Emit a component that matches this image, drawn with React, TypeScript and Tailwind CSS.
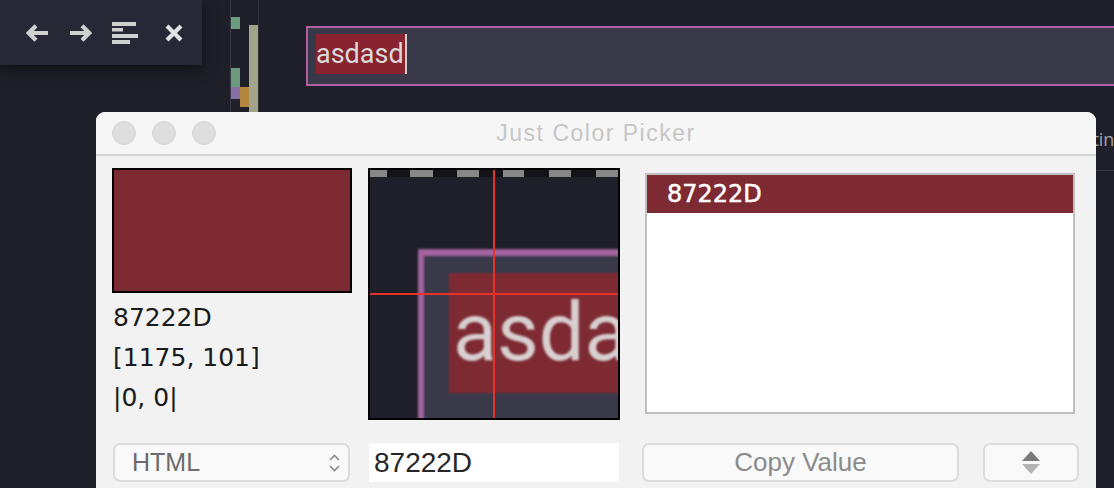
import React from 'react'

const ArrowLeft = () => (
  <svg width="22" height="18" viewBox="0 0 22 18" fill="none">
    <path d="M10 1.8 L2.8 9 L10 16.2 M3.5 9 H22" stroke="#d0d0d0" strokeWidth="4.2" />
  </svg>
)

const ArrowRight = () => (
  <svg width="22" height="18" viewBox="0 0 22 18" fill="none">
    <path d="M12 1.8 L19.2 9 L12 16.2 M18.5 9 H0" stroke="#d0d0d0" strokeWidth="4.2" />
  </svg>
)

const AlignLeft = () => (
  <svg width="26" height="22" viewBox="0 0 26 22" fill="#d0d0d0">
    <rect x="0" y="0" width="24" height="4" />
    <rect x="0" y="6" width="11" height="3.5" />
    <rect x="0" y="12" width="26" height="4" />
    <rect x="0" y="18" width="18" height="4" />
  </svg>
)

const Close = () => (
  <svg width="18" height="18" viewBox="0 0 18 18" fill="none">
    <path d="M2 2 L16 16 M16 2 L2 16" stroke="#e2e2e2" strokeWidth="4.2" />
  </svg>
)

function Toolbar() {
  return (
    <div className="flex h-[65px] w-[202px] items-center bg-[#272736] pl-[26px] shadow-[0_4px_12px_rgba(0,0,0,0.55)]">
      <ArrowLeft />
      <div className="ml-[22px]">
        <ArrowRight />
      </div>
      <div className="ml-[20px]">
        <AlignLeft />
      </div>
      <div className="ml-[27px]">
        <Close />
      </div>
    </div>
  )
}

function Strip() {
  return (
    <div className="h-full w-[29px] shrink-0 border-l border-r border-l-[#3a3a48] border-r-[#2e2e3a]">
      <svg width="27" height="488" viewBox="0 0 27 488">
        <rect x="0" y="17" width="9" height="12" fill="#6b9a7c" />
        <rect x="0" y="68" width="9" height="19" fill="#6b9a7c" />
        <rect x="0" y="87" width="9" height="12" fill="#8770a6" />
        <rect x="9" y="87" width="9" height="20" fill="#b3873d" />
        <rect x="18" y="25" width="9" height="463" fill="#a3a38a" />
      </svg>
    </div>
  )
}

function Editor() {
  return (
    <div className="flex min-w-0 flex-1 flex-col">
      <div className="pl-[47px] pt-[26px]">
        <div className="-mr-[12px] flex h-[60px] items-start border-2 border-[#b35fa6] bg-[#383849] pl-[8px] pt-[6px]">
          <span className="inline-block h-[40px] bg-[#88232f] pr-[1px] font-['Roboto',sans-serif] text-[27px] leading-[40px] text-[#dadada]">
            asdasd
          </span>
          <span className="h-[40px] w-[2px] bg-[#cfcfcf]" />
        </div>
      </div>
      <div className="h-[85px] border-b border-[#393946] pl-[807px] pt-[44px] font-['Open_Sans',sans-serif] text-[18px] leading-[18px] whitespace-nowrap text-[#a0a0a8]">
        Settings
      </div>
    </div>
  )
}

function Magnifier() {
  return (
    <div className="relative ml-[16px] h-[252px] w-[252px] shrink-0 overflow-hidden border-2 border-black bg-[#1f1f29]">
      <div className="flex h-[7px] bg-[#131318]">
        <div className="w-[19px] bg-[#878787]" />
        <div className="ml-[23px] w-[25px] bg-[#878787]" />
        <div className="ml-[24px] w-[24px] bg-[#878787]" />
        <div className="ml-[24px] w-[24px] bg-[#878787]" />
        <div className="ml-[25px] w-[24px] bg-[#878787]" />
        <div className="ml-[25px] w-[24px] bg-[#878787]" />
      </div>
      <div className="ml-[48px] mt-[72px] h-[200px] w-[260px] border-l-[6px] border-t-[7px] border-[#a2639f] bg-[#393949] pl-[25px] pt-[17px] blur-[0.8px]">
        <div className="h-[120px] w-[300px] bg-[#7e2a32] pl-[4px] font-['Roboto',sans-serif] text-[81px] leading-[120px] text-[#d8d0d0]">
          asda
        </div>
      </div>
      <div className="absolute left-[123px] top-0 h-full w-[2px] bg-[#e5322a]" />
      <div className="absolute left-0 top-[123px] h-[2px] w-full bg-[#e5322a]" />
    </div>
  )
}

function PickerWindow() {
  return (
    <div className="absolute left-[96px] top-[112px] h-[400px] w-[1000px] overflow-hidden rounded-t-[9px] bg-[#f2f2f2]">
      <div className="grid h-[44px] grid-cols-[1fr_auto_1fr] items-center border-b-2 border-[#d3d3d3] bg-[#f6f6f6]">
        <div className="flex gap-[16px] pl-[16px]">
          <div className="h-[24px] w-[24px] rounded-full border border-[#d6d6d6] bg-[#dedede]" />
          <div className="h-[24px] w-[24px] rounded-full border border-[#d6d6d6] bg-[#dedede]" />
          <div className="h-[24px] w-[24px] rounded-full border border-[#d6d6d6] bg-[#dedede]" />
        </div>
        <div className="font-['Liberation_Sans',sans-serif] text-[23px] tracking-[1.5px] text-[#c6c6c6]">
          Just Color Picker
        </div>
        <div />
      </div>

      <div className="px-[16px] pt-[12px]">
        <div className="flex items-start">
          <div className="w-[240px] shrink-0">
            <div className="h-[125px] border-2 border-black bg-[#7e2a32]" />
            <div className="mt-[5px] pl-[1px] font-['DejaVu_Sans',sans-serif] text-[25px] leading-[40px] text-[#1a1a1a]">
              <div>87222D</div>
              <div>[1175, 101]</div>
              <div>|0, 0|</div>
            </div>
          </div>
          <Magnifier />
          <div className="ml-[25px] mt-[5px] h-[241px] w-[430px] border-2 border-[#bfbfbf] bg-white">
            <div className="h-[38px] bg-[#7e2a32] pl-[20px] font-['DejaVu_Sans',sans-serif] text-[24px] leading-[38px] text-white [-webkit-text-stroke:0.5px_white]">
              87222D
            </div>
          </div>
        </div>

        <div className="mt-[23px] flex items-center pl-[1px] font-['Liberation_Sans',sans-serif]">
          <div className="flex h-[39px] w-[237px] items-center justify-between rounded-[7px] border-2 border-[#dcdcdc] bg-[#f9f9f9] pl-[17px] pr-[7px] text-[25px] text-[#6b6b6b]">
            <span>HTML</span>
            <svg width="13" height="20" viewBox="0 0 13 20" fill="none">
              <path d="M2 7 L6.5 2.5 L11 7 M2 13 L6.5 17.5 L11 13" stroke="#8a8a8a" strokeWidth="1.6" />
            </svg>
          </div>
          <div className="ml-[19px] flex h-[39px] w-[250px] items-center bg-white pl-[5px] text-[28px] text-[#262626]">
            87222D
          </div>
          <div className="ml-[23px] flex h-[39px] w-[317px] items-center justify-center rounded-[7px] border-2 border-[#dcdcdc] bg-[#f9f9f9] text-[26px] text-[#8b8b8b]">
            Copy Value
          </div>
          <div className="ml-[24px] flex h-[39px] w-[96px] items-center justify-center rounded-[7px] border-2 border-[#dcdcdc] bg-[#f9f9f9]">
            <svg width="18" height="23" viewBox="0 0 18 23">
              <polygon points="0,10 9,0 18,10" fill="#7a7a7a" />
              <polygon points="0,13 18,13 9,23" fill="#b3b3b3" />
            </svg>
          </div>
        </div>
      </div>
    </div>
  )
}

export default function App() {
  return (
    <div className="relative h-[488px] w-[1114px] overflow-hidden bg-[#1f1f29] font-['Liberation_Sans',sans-serif]">
      <div className="flex h-full">
        <div className="w-[230px] shrink-0">
          <Toolbar />
        </div>
        <Strip />
        <Editor />
      </div>
      <PickerWindow />
    </div>
  )
}
